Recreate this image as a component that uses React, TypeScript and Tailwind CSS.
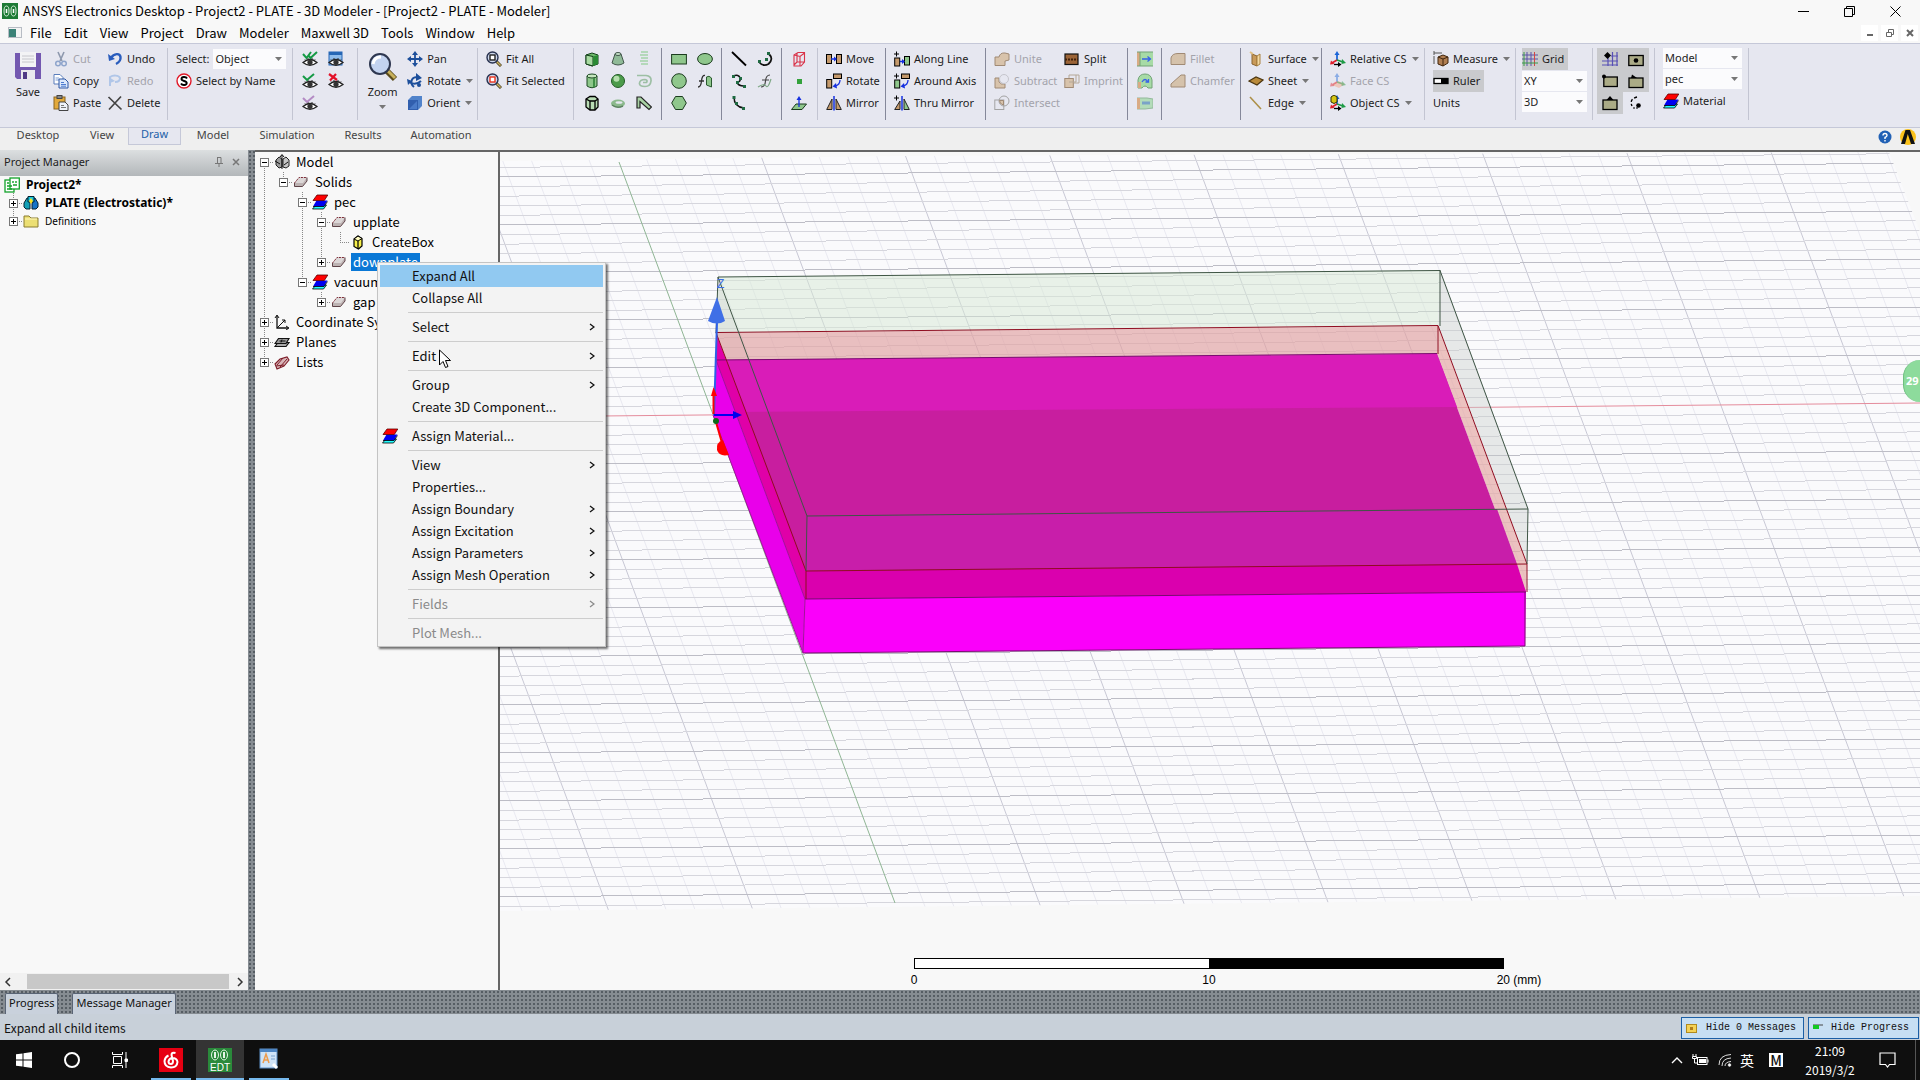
import React from 'react';

const Svg: React.FC<{ s?: number; children: React.ReactNode }> = ({ s = 16, children }) => (
  <svg width={s} height={s} viewBox="0 0 16 16" fill="none" className="shrink-0" aria-hidden="true">
    {children}
  </svg>
);

const Eye = () => (
  <>
    <path d="M1 11.5Q8 5.500 15 11.500Q8 17 1 11.500Z" fill="#fff" stroke="#222" strokeWidth="1.300" />
    <circle cx="8" cy="11.300" r="2.600" fill="#333" />
    <path d="M3 8.500L4.500 10M6 7V9M10 7V9M13 8.500L11.500 10" stroke="#222" />
  </>
);

const Stack = () => (
  <>
    <path d="M4 11H14.500L11.500 15H.5Z" fill="#2ff" stroke="#000" strokeWidth=".8" />
    <path d="M4.500 6.500H15.500L12 12.500H1Z" fill="#0000f0" />
    <path d="M1 12.500H12L15.500 7.500" stroke="#000" strokeWidth=".8" />
    <path d="M5 1H15.800L12.300 6.500H1Z" fill="#f00" stroke="#5a0000" strokeWidth=".8" />
  </>
);

const Lens: React.FC<{ c: string }> = ({ c }) => (
  <>
    <path d="M10 10L15 15" stroke="#4a3f20" strokeWidth="3" />
    <path d="M10.500 10.500L14.600 14.600" stroke="#c9b25f" strokeWidth="1.400" />
    <circle cx="6.500" cy="6.500" r="5.500" fill="#cdd7ec" stroke="#26304e" strokeWidth="1.400" />
    <rect x="4" y="4" width="5" height="5" fill="#fff" stroke={c} strokeWidth="1.400" />
  </>
);

const Axes: React.FC<{ soft?: boolean }> = ({ soft }) => (
  <g opacity={soft ? 0.45 : 1}>
    <path d="M7 9V2" stroke="#1c66d8" strokeWidth="1.800" />
    <path d="M4.500 4L7 0L9.500 4Z" fill="#1c66d8" />
    <path d="M7 9L2 12" stroke="#e0202c" strokeWidth="1.800" />
    <path d="M0 13.500L1 9.500L4.500 13Z" fill="#e0202c" />
    <path d="M7 9L13 11" stroke="#1d9b46" strokeWidth="1.800" />
    <path d="M12 8L16 12L11.500 13Z" fill="#1d9b46" />
  </g>
);

const tan = '#c59a6c';
const green = '#8fc78c';

const icons: Record<string, React.ReactNode> = {
  cut: <><path d="M5 1L9 10M11 1L7 10" stroke="#8d98ad" strokeWidth="1.600" /><circle cx="5" cy="12.500" r="2.300" stroke="#8fa5cc" strokeWidth="1.500" /><circle cx="11" cy="12.500" r="2.300" stroke="#8fa5cc" strokeWidth="1.500" /></>,
  copy: <><path d="M1 1.500H7L10 4.500V11H1Z" fill="#fff" stroke="#5a7dbb" /><path d="M2.500 5H6M2.500 7H6" stroke="#7f9fd6" /><path d="M6 6H12L15 9V15H6Z" fill="#dce8fb" stroke="#2c56a5" /><path d="M8 9.500H11M8 11.500H13M8 13.200H13" stroke="#4d7bd0" /></>,
  paste: <><rect x="1" y="2" width="11" height="12" fill="#e2a93b" stroke="#8a6420" /><rect x="4" y="0.500" width="5" height="3" fill="#888" stroke="#444" /><path d="M6 7H12L15 10V15.500H6Z" fill="#eef2fa" stroke="#444" /><path d="M8 10.500H11M8 12.500H13" stroke="#777" /></>,
  undo: <><path d="M1 3L2 10L8 8Z" fill="#2a5dbd" /><path d="M4 7C7 2 13 2 13.500 6C14 10 11 12 9 13" stroke="#2a5dbd" strokeWidth="2.400" /></>,
  redo: <><path d="M2 4L3 10L8 8Z" fill="#b0c6e8" /><path d="M3 13V4C6 2 12 2 13 5C13 8 11 9 8 9" stroke="#b0c6e8" strokeWidth="2" /></>,
  del: <path d="M1.500 2L14.500 14.500M14 1.500L2 14.500" stroke="#444" strokeWidth="1.700" />,
  byName: <><circle cx="8" cy="8" r="7" fill="#fff" stroke="#e01828" strokeWidth="1.400" /><path d="M11 5.500C10 3.500 5.500 3.500 5.500 6C5.500 8.500 10.700 7.500 10.700 10C10.700 12.500 6 12.500 5 10.500" stroke="#000" strokeWidth="1.900" /></>,
  eyeAll: <><Eye /><path d="M1 3L4.500 7L9 1M6 4L8.500 7L15 1" stroke="#159a45" strokeWidth="2" /></>,
  eyeWin: <><rect x="1" y="1" width="13" height="13" fill="#8fbdec" stroke="#2667b5" /><rect x="1" y="1" width="13" height="3" fill="#2667b5" /><Eye /></>,
  eyeOn: <><Eye /><path d="M1 3L5 7L12 1" stroke="#159a45" strokeWidth="2" /></>,
  eyeOff: <><Eye /><path d="M1 1L9 7M8 1L2 7.500" stroke="#e3122a" strokeWidth="2.200" /></>,
  eyeAct: <><Eye /><path d="M1 3L5 7L12 1" stroke="#b48bc4" strokeWidth="2" /></>,
  pan: <><path d="M8 2V14M2 8H14" stroke="#1d4f9b" strokeWidth="1.800" /><path d="M8 0L11 4H5ZM8 16L5 12H11ZM0 8L4 5V11ZM16 8L12 11V5Z" fill="#1d4f9b" /></>,
  rot: <><path d="M7 14C2 10 5 2 11 5M14 8C10 12 3 11 2 8" stroke="#1d4f9b" strokeWidth="2" /><path d="M9 0L15 5L9 8ZM5 8L0 6L1 12Z" fill="#1d4f9b" /><circle cx="12" cy="12" r="2" fill="#1d4f9b" /></>,
  orient: <><path d="M1 5L5 1H15V11L11 15H1Z" fill="#5183cb" /><path d="M1 5H11V15H1Z" fill="#315fae" /><path d="M2 14L10 6V14Z" fill="#4a7bc8" /></>,
  fitAll: <Lens c="#222" />,
  fitSel: <Lens c="#e8321c" />,
  box: <><path d="M2 4L8 2L14 4V13L8 15L2 13Z" fill="#6fba6c" stroke="#123f18" /><path d="M2 4L9 5.500V15L2 13Z" fill="#a8dba2" stroke="#123f18" /><path d="M9 5.500L14 4V13L9 15Z" fill="#2b8a35" /></>,
  cone: <><path d="M5 3L2 12Q8 16 14 12L11 3Z" fill="#8fba97" stroke="#41564a" /><ellipse cx="8" cy="3" rx="3" ry="1.500" fill="#c3dfc6" stroke="#41564a" /></>,
  helix: <path d="M5 1H12M4 4H12M5 7H12M4 10H12M5 13H12" stroke="#a4d3a8" strokeWidth="1.500" />,
  cyl: <><path d="M3 3V13Q8 16.500 13 13V3Z" fill="#8dc78a" stroke="#1e4a25" /><ellipse cx="8" cy="3" rx="5" ry="2" fill="#c4e6be" stroke="#1e4a25" /><path d="M10 5V14.500" stroke="#3f8f46" strokeWidth="2" /></>,
  sphere: <><circle cx="8" cy="8" r="6.500" fill="#4b9b4a" stroke="#245c28" /><circle cx="6.500" cy="5.800" r="3" fill="#b6dfae" /></>,
  spiral: <path d="M1 2.500H10Q15.500 3 15 8Q14.500 13.500 9 13.500Q3 13.500 3.500 10Q4 6.500 9 6.500Q12 7 10.500 9.500H7" stroke="#9dbfa4" strokeWidth="1.700" />,
  poly: <><path d="M2 4L6 1.500H11L14 4V12L11 15H6L2 12Z" fill="#b8dcb4" stroke="#000" strokeWidth="1.300" /><path d="M2 4L6 6H11L14 4M6 6V15M11 6V15" stroke="#000" strokeWidth="1.300" /></>,
  torus: <><ellipse cx="8" cy="8.500" rx="7" ry="4" fill="#8bb98c" /><ellipse cx="9" cy="7.500" rx="3.500" ry="1.300" fill="#e6e7f0" /><path d="M2 10Q7 14 13 11" stroke="#5d8261" strokeWidth="1.500" /></>,
  sweep: <path d="M1 13V2H5L15.500 12L13 14.500L4 6.500V13Z" fill="#a9d2a5" stroke="#222" strokeWidth="1.200" />,
  rect: <rect x="0.600" y="3.500" width="14.800" height="9.500" fill={green} stroke="#1b3b1e" />,
  ellipse: <ellipse cx="8" cy="8" rx="7.400" ry="5.500" fill={green} stroke="#1b3b1e" />,
  circle: <circle cx="8" cy="8" r="7.300" fill={green} stroke="#1b3b1e" />,
  eqSurf: <><path d="M1 14Q4 14 4.500 8T8 2.500M2 8H7" stroke="#333" strokeWidth="1.300" /><path d="M9.500 4Q12 2 14.500 5V14L9.500 12Z" fill={green} stroke="#2b5a30" /></>,
  hex: <path d="M4.500 1.500H11.500L15.300 8L11.500 14.500H4.500L.7 8Z" fill={green} stroke="#1b3b1e" />,
  line: <path d="M1 1L15 14.500" stroke="#000" strokeWidth="1.800" />,
  arc: <><path d="M2 11Q6 16 11.500 13Q17 8 12 3" stroke="#111" strokeWidth="1.800" /><path d="M1 9H4V12H1ZM8 7H11V10H8ZM10 1H13V4H10Z" fill="#1f6a42" /></>,
  spline: <><path d="M2 3Q8 1 9 5T6 9Q7 13 13 13" stroke="#111" strokeWidth="1.500" /><path d="M1 2H4V5H1ZM8 4H11V7H8ZM5 8H8V11H5ZM12 12H15V15H12Z" fill="#1f6a42" /></>,
  eqCurve: <><path d="M4 14Q8 14 8.500 8T13 2M5 7H12" stroke="#444" strokeWidth="1.200" /><path d="M1 14Q7 10 9 13T14 6" stroke="#80a988" strokeWidth="1.200" /></>,
  arc3: <><path d="M3 2Q3 12 13 13" stroke="#111" strokeWidth="1.500" /><path d="M1.500 1H4.500V4H1.500ZM4 7H7V10H4ZM11 12H14V15H11Z" fill="#1f6a42" /></>,
  wire: <path d="M3 4L7 1.500H13.500V11L10 15H3ZM3 4L9 5.500L13.500 2M9 5.500V15M6 2V11H13M3 14L6 11" stroke="#d93248" strokeWidth="1.100" />,
  point: <rect x="6" y="6" width="5" height="5" fill="#33a23c" />,
  plane: <><path d="M5 9H15.500L11 14.500H.5Z" fill={green} stroke="#1b3b1e" /><path d="M8 12V3" stroke="#1530e0" strokeWidth="1.300" /><path d="M5.500 5L8 1L10.500 5Z" fill="#1530e0" /></>,
  move: <><rect x=".5" y="3.500" width="5" height="9" fill={tan} stroke="#000" /><rect x="10.500" y="3.500" width="5" height="9" fill={tan} stroke="#000" /><path d="M5 8H9" stroke="#1530e0" strokeWidth="1.500" /><path d="M8 5.500L11 8L8 10.500Z" fill="#1530e0" /></>,
  rotate: <><rect x=".7" y="6.500" width="5" height="8.500" fill={tan} stroke="#000" /><rect x="7.500" y="1" width="8" height="4.500" fill={tan} stroke="#000" /><path d="M14 7Q14 12 9 13" stroke="#1530e0" strokeWidth="1.300" /><path d="M10 10L6.500 13.500L11 15.500Z" fill="#1530e0" /></>,
  mirror: <><path d="M6 4V14.500H.7Z" fill={tan} stroke="#222" /><path d="M10 4V14.500H15.300Z" fill={tan} stroke="#222" /><path d="M8 1V15.500" stroke="#1530e0" strokeWidth="1.500" /></>,
  along: <><rect x=".7" y="7" width="5" height="8" fill={tan} stroke="#000" /><rect x="10.500" y="5.500" width="5" height="8.500" fill={green} stroke="#000" /><path d="M6 10.500H10" stroke="#1530e0" strokeWidth="1.500" /><path d="M8 8L11 10.500L8 13Z" fill="#1530e0" /><path d="M0 3H5M2.500 .5V5.500" stroke="#000" /></>,
  around: <><rect x=".7" y="7" width="5" height="8" fill={green} stroke="#000" /><rect x="7.500" y="1" width="8" height="4.500" fill={tan} stroke="#000" /><path d="M14 7Q14 12 9 13" stroke="#1530e0" strokeWidth="1.300" /><path d="M10 10L6.500 13.500L11 15.500Z" fill="#1530e0" /><path d="M0 3H5M2.500 .5V5.500" stroke="#000" /></>,
  thru: <><path d="M6 6V14.500H.7Z" fill={tan} stroke="#222" /><path d="M10 4V14.500H15.300Z" fill={green} stroke="#222" /><path d="M8 1V15.500" stroke="#1530e0" strokeWidth="1.500" /><path d="M0 3H5M2.500 .5V5.500" stroke="#000" /></>,
  unite: <path d="M1 6H5Q6 1.500 11 2L15 3V9L11 10V14.500H1Z" fill="#d8c3ab" stroke="#a08a75" />,
  subtract: <><path d="M1 5H5V9Q7 12 11 11V15H1Z" fill="#d8c3ab" stroke="#a08a75" /><circle cx="10" cy="6" r="4.500" stroke="#c5c5cc" /></>,
  intersect: <><rect x=".8" y="5" width="9" height="9.500" stroke="#a3a3a3" /><circle cx="10" cy="6" r="5" stroke="#a3a3a3" /><path d="M5.500 5.500H9.500V10Q5.500 9 5.500 5.500Z" fill="#d8c3ab" stroke="#a08a75" /></>,
  split: <><rect x="1" y="3" width="13" height="10.500" fill="#9b6437" stroke="#111" strokeWidth="1.200" /><path d="M1 8.500H14" stroke="#40210b" strokeDasharray="2 1" strokeWidth="2" /></>,
  imprint: <><rect x=".8" y="5.500" width="8.500" height="9" fill="#d8c3ab" stroke="#a08a75" /><path d="M5 5V2H15V10H10M5 9H12V2" stroke="#b5a898" /></>,
  gLine: <><rect x="0" y="1" width="16" height="14" fill="#a7dba6" /><rect x="0" y="1" width="3" height="14" fill="#d9ab84" /><path d="M0 1H16M0 15H16M3 1V15" stroke="#72a377" /><path d="M5 8H13M10.500 5.500L13.500 8L10.500 10.500" stroke="#3762e8" strokeWidth="1.300" /></>,
  gArc: <><path d="M1 15V7Q2 1 8 1T15 7V15H11Q8 11 5 15Z" fill="#a7dba6" stroke="#72a377" /><path d="M1 9H4V15H1Z" fill="#d9ab84" /><path d="M5 9Q8 4 11 9M8.500 9H11.500V6" stroke="#3762e8" strokeWidth="1.300" /></>,
  gPath: <><path d="M0 3H10L16 4V13L8 14H0Z" fill="#b3dcb9" stroke="#93b99b" /><rect x="0" y="3" width="3" height="11" fill="#d9ab84" /><path d="M5 8H13" stroke="#7aa3c8" strokeWidth="3" /></>,
  fillet: <path d="M1 13.500V7Q2 2.500 8 2.500H15V13.500Z" fill="#d5c2ab" stroke="#a08a75" />,
  chamfer: <path d="M1 14V11L11 2H15V14Z" fill="#d5c2ab" stroke="#a08a75" />,
  surface: <><path d="M4 3L9 5V15L4 13Z" fill="#c99a58" stroke="#8a6430" /><path d="M9 5L12 3V13L9 15Z" fill="#f3d9a2" stroke="#a9813f" /><path d="M2 1L5 3" stroke="#e0bf80" strokeWidth="2" /></>,
  sheet: <path d="M1 8L8 4L15 7L9 12Z" fill="#b98a3a" stroke="#4c3610" strokeWidth="1.200" />,
  edge: <path d="M2 2L13 14" stroke="#ad9048" strokeWidth="1.600" />,
  relCS: <><Axes /><path d="M4 13.500H9" stroke="#000" strokeWidth="1.300" /><path d="M8 11L11.500 13.500L8 16Z" fill="#000" /></>,
  faceCS: <><path d="M2 12L8 8L15 11L9 15Z" fill="#edc7bc" /><Axes soft /></>,
  objCS: <><Axes /><path d="M1 2L4 0L7 2V7L4 8.500L1 7Z" fill="#d6c512" stroke="#332f00" /><path d="M4 13.500H9" stroke="#000" strokeWidth="1.300" /><path d="M8 11L11.500 13.500L8 16Z" fill="#000" /></>,
  measure: <><path d="M5 6L10 4L15 6V12L10 15L5 13Z" fill="#b07e51" stroke="#40250d" /><path d="M5 6L10 8V15M10 8L15 6" stroke="#40250d" /><path d="M1 2H9M1 0V4M1 5V13" stroke="#555" /></>,
  ruler: <><rect x="1" y="5.500" width="14" height="5" fill="#fff" stroke="#000" strokeWidth="1.300" /><rect x="8" y="5.500" width="7" height="5" fill="#000" /></>,
  grid: <><path d="M5 1V15M9 1V15" stroke="#5b53a8" /><path d="M0 4H16M0 8H16" stroke="#5b53a8" /><path d="M12.500 1V15" stroke="#d44545" /><path d="M0 12H16" stroke="#3a9a48" /><path d="M2 1V15" stroke="#3a9a48" /></>,
  snapGrid: <><path d="M6 3V15M10.500 1V15M15 1V15M0 10H16M0 14H16M9 5H16" stroke="#5850b5" strokeWidth="1.200" /><path d="M5.500 1L9 4.500L5.500 8L2 4.500Z" fill="#000" /></>,
  snapCenter: <><rect x=".8" y="4.500" width="14.400" height="10" fill="#abab86" stroke="#000" strokeWidth="1.300" /><circle cx="8" cy="9.500" r="2.300" fill="#000" /></>,
  snapVertex: <><rect x="1.800" y="4" width="13.500" height="9.500" fill="#abab86" stroke="#000" strokeWidth="1.300" /><circle cx="2" cy="3.500" r="2" fill="#000" /></>,
  snapEdge: <><rect x="1" y="5" width="14" height="9.500" fill="#abab86" stroke="#000" strokeWidth="1.300" /><path d="M4 1.500L9 5H3Z" fill="#000" /></>,
  snapMid: <><rect x="1" y="5" width="14" height="9.500" fill="#abab86" stroke="#000" strokeWidth="1.300" /><path d="M8 1L11.500 5H4.500Z" fill="#000" /></>,
  snapArc: <><path d="M9 2Q1 4 4 11" stroke="#000" strokeDasharray="3 2" strokeWidth="1.300" /><path d="M5 13H11" stroke="#000" strokeDasharray="2 1" /><circle cx="10.500" cy="10.500" r="2.300" fill="#000" /></>,
  stack: <Stack />,
  model: <><path d="M2 6L5 3L8 5V13L5 14L2 11Z" fill="#9b9b9b" stroke="#222" /><path d="M9 5L12 3L15 6V12L12 14L9 13Z" fill="#c7c7c7" stroke="#222" /><path d="M8 1V15M8 0.500L10 3M8 .5L6 3M1 7L6 10M14 8L10 11" stroke="#111" /></>,
  solid: <><path d="M1.500 9L6 3.500H14V7L9.500 12.500H1.500Z" fill="#bdb3b3" /><path d="M1.500 9L6 3.500H14L10 9Z" fill="#dcd7d7" /><path d="M1.500 9L6 3.500H14" stroke="#7d2a35" strokeDasharray="2 1" /><path d="M14 3.500V7L9.500 12.500H1.500V9" stroke="#5f4348" /></>,
  cbox: <><path d="M4 5L8 2L12 4.500V12L8.500 15L4 12.500Z" fill="#f7f04a" stroke="#000" strokeWidth="1.200" /><path d="M4 5L8 7L12 4.500L8 2Z" fill="#fffcc0" stroke="#000" /><path d="M8 7V15" stroke="#000" strokeWidth="1.200" /></>,
  coord: <><path d="M3 2V14H14" stroke="#111" strokeWidth="1.300" /><path d="M1 4L3 1L5 4M12 12L15 14L12 16M3 14L11 6M8 6H11V9" stroke="#111" /></>,
  planes: <><path d="M1 12.500L4 8.500H15L12 12.500Z" fill="#aaa" stroke="#111" strokeWidth="1.200" /><path d="M1 9.500L4.500 4.500H15L12 9.500Z" fill="#999" stroke="#111" strokeWidth="1.200" /><path d="M5.500 7H11.500M8 5.500L7 8.500" stroke="#111" /></>,
  lists: <><path d="M1 10L6 5L13 3L15 6L10 12L3 15Z" fill="#d9b5b8" stroke="#7d1d28" strokeWidth="1.100" /><path d="M3 11L9 4M6 13L13 5M2 12L10 11" stroke="#7d1d28" /></>,
  project: <><rect x="1" y="3" width="9" height="12" fill="#fff" stroke="#12a22a" strokeWidth="1.300" /><rect x="6" y="1" width="9.300" height="11" fill="#fff" stroke="#12a22a" strokeWidth="1.300" /><path d="M3 6H5M3 9H8M3 12H8M9 4V6M12 4V6M9 8H13" stroke="#12a22a" strokeWidth="1.400" /></>,
  design: <><path d="M1 8L4 3H7V14H3L1 12Z" fill="#12a0b5" stroke="#04202e" /><path d="M9 3H12L15 8V12L13 14H9Z" fill="#1473c8" stroke="#04202e" /><path d="M5 1.500H11V7H5Z" fill="#19c8e0" stroke="#04202e" /><path d="M8 3L10 6L8 9L6 6Z" fill="#ffe11a" /></>,
  folder: <><path d="M1 3H6L8 5H15V14H1Z" fill="#ecdf73" stroke="#8a7c31" /><path d="M2 6H14" stroke="#fff8c0" /></>,
};

const Icon: React.FC<{ name: string; s?: number }> = ({ name, s }) => <Svg s={s}>{icons[name]}</Svg>;

const Caret = () => (
  <svg width="7" height="4" viewBox="0 0 7 4" className="shrink-0" aria-hidden="true"><path d="M0 0H7L3.500 4Z" fill="#777" /></svg>
);

interface CmdProps {
  icon: string;
  label: string;
  off?: boolean;
  caret?: boolean;
  on?: boolean;
}

const Cmd: React.FC<CmdProps> = ({ icon, label, off, caret, on }) => (
  <button disabled={off} className={`flex h-[22px] items-center gap-1 whitespace-nowrap pr-1 ${off ? 'text-[#a3a3ab]' : 'text-[#1c1c1c]'} ${on ? 'bg-[#c9cacd]' : ''}`}>
    <Icon name={icon} />
    <span>{label}</span>
    {caret && <span className="ml-px"><Caret /></span>}
  </button>
);

const IconGrid: React.FC<{ cols: string[][]; label: string }> = ({ cols, label }) => (
  <div className="flex" role="group" aria-label={label}>
    {cols.map((col, i) => (
      <div key={i} className="flex w-[26px] flex-col">
        {col.map(n => (
          <button key={n} aria-label={n} className="flex h-[22px] items-center justify-center"><Icon name={n} /></button>
        ))}
      </div>
    ))}
  </div>
);

const Group: React.FC<{ w: string; soft?: boolean; children: React.ReactNode }> = ({ w, soft, children }) => (
  <div className={`flex h-[72px] shrink-0 border-r ${soft ? 'border-[#c3c5d2]' : 'border-[#85889a]'} ${w}`}>{children}</div>
);

const Drop: React.FC<{ label: string; value: string; w: string }> = ({ label, value, w }) => (
  <div className={`relative flex h-[20px] items-center bg-[#fbfbfd] ${w}`}>
    <select aria-label={label} className="h-full w-full appearance-none bg-transparent pl-0.5 text-[#222] outline-none">
      <option>{value}</option>
    </select>
    <span className="pointer-events-none absolute right-1"><Caret /></span>
  </div>
);

const tabs = [
  { name: 'Desktop', w: 'w-[76px]' },
  { name: 'View', w: 'w-[52px]' },
  { name: 'Draw', w: 'w-[53px]' },
  { name: 'Model', w: 'w-[64px]' },
  { name: 'Simulation', w: 'w-[84px]' },
  { name: 'Results', w: 'w-[68px]' },
  { name: 'Automation', w: 'w-[88px]' },
];
const menus = ['File', 'Edit', 'View', 'Project', 'Draw', 'Modeler', 'Maxwell 3D', 'Tools', 'Window', 'Help'];

const Ribbon = () => (
  <div className="flex h-[85px] shrink-0 overflow-hidden border-y border-[#c5c8d8] bg-[#e6e7f0] pt-1 pl-[3px]">
    <Group w="w-[165px]" soft>
      <button className="flex w-[50px] flex-col items-center pt-1">
        <svg width="28" height="28" viewBox="0 0 28 28" aria-hidden="true">
          <path d="M1 1H27V27H3L1 25Z" fill="#7358b0" />
          <rect x="6" y="0" width="16" height="15" fill="#f3f3f5" />
          <path d="M8 4H20M8 7H20M8 10H20" stroke="#c6c6cc" />
          <rect x="7" y="18" width="14" height="9" fill="#e9e9ee" />
          <rect x="9" y="20" width="4" height="7" fill="#4f3a86" />
        </svg>
        <span className="mt-1">Save</span>
      </button>
      <div className="flex w-[54px] flex-col items-start">
        <Cmd icon="cut" label="Cut" off />
        <Cmd icon="copy" label="Copy" />
        <Cmd icon="paste" label="Paste" />
      </div>
      <div className="flex flex-col items-start">
        <Cmd icon="undo" label="Undo" />
        <Cmd icon="redo" label="Redo" off />
        <Cmd icon="del" label="Delete" />
      </div>
    </Group>
    <Group w="w-[125px]" soft>
      <div className="flex flex-col items-start pl-2">
        <div className="flex h-[22px] items-center gap-1">
          <span>Select:</span>
          <Drop label="Select" value="Object" w="w-[73px]" />
        </div>
        <Cmd icon="byName" label="Select by Name" />
      </div>
    </Group>
    <Group w="w-[65px]" soft>
      <div className="pl-1"><IconGrid label="Visibility" cols={[['eyeAll', 'eyeOn', 'eyeAct'], ['eyeWin', 'eyeOff']]} /></div>
    </Group>
    <Group w="w-[120px]" soft>
      <button className="flex w-[50px] flex-col items-center pt-1">
        <svg width="30" height="30" viewBox="0 0 30 30" aria-hidden="true">
          <path d="M19 19L27 27" stroke="#5b4c1c" strokeWidth="6" />
          <path d="M20 19L27 26" stroke="#c8b15c" strokeWidth="3" />
          <circle cx="12" cy="12" r="10" fill="#c3d3f0" stroke="#2e3750" strokeWidth="2" />
          <path d="M5 12Q6 5 13 5" stroke="#fff" strokeWidth="3" fill="none" />
        </svg>
        <span className="mt-0.5 mb-1">Zoom</span>
        <Caret />
      </button>
      <div className="flex flex-col items-start">
        <Cmd icon="pan" label="Pan" />
        <Cmd icon="rot" label="Rotate" caret />
        <Cmd icon="orient" label="Orient" caret />
      </div>
    </Group>
    <Group w="w-[96px]" soft>
      <div className="flex flex-col items-start pl-2">
        <Cmd icon="fitAll" label="Fit All" />
        <Cmd icon="fitSel" label="Fit Selected" />
      </div>
    </Group>
    <Group w="w-[88px]">
      <div className="pl-[5px]"><IconGrid label="Solids" cols={[['box', 'cyl', 'poly'], ['cone', 'sphere', 'torus'], ['helix', 'spiral', 'sweep']]} /></div>
    </Group>
    <Group w="w-[60px]">
      <div className="pl-1"><IconGrid label="Sheets" cols={[['rect', 'circle', 'hex'], ['ellipse', 'eqSurf']]} /></div>
    </Group>
    <Group w="w-[60px]">
      <div className="pl-1"><IconGrid label="Curves" cols={[['line', 'spline', 'arc3'], ['arc', 'eqCurve']]} /></div>
    </Group>
    <Group w="w-[36px]" soft>
      <div className="pl-1"><IconGrid label="Primitives" cols={[['wire', 'point', 'plane']]} /></div>
    </Group>
    <Group w="w-[68px]">
      <div className="flex flex-col items-start pl-2">
        <Cmd icon="move" label="Move" />
        <Cmd icon="rotate" label="Rotate" />
        <Cmd icon="mirror" label="Mirror" />
      </div>
    </Group>
    <Group w="w-[100px]">
      <div className="flex flex-col items-start pl-2">
        <Cmd icon="along" label="Along Line" />
        <Cmd icon="around" label="Around Axis" />
        <Cmd icon="thru" label="Thru Mirror" />
      </div>
    </Group>
    <Group w="w-[142px]">
      <div className="flex w-[78px] shrink-0 flex-col items-start pl-2">
        <Cmd icon="unite" label="Unite" off />
        <Cmd icon="subtract" label="Subtract" off />
        <Cmd icon="intersect" label="Intersect" off />
      </div>
      <div className="flex flex-col items-start">
        <Cmd icon="split" label="Split" />
        <Cmd icon="imprint" label="Imprint" off />
      </div>
    </Group>
    <Group w="w-[34px]">
      <div className="pl-1"><IconGrid label="Sweep" cols={[['gLine', 'gArc', 'gPath']]} /></div>
    </Group>
    <Group w="w-[79px]">
      <div className="flex flex-col items-start pl-2">
        <Cmd icon="fillet" label="Fillet" off />
        <Cmd icon="chamfer" label="Chamfer" off />
      </div>
    </Group>
    <Group w="w-[81px]">
      <div className="flex flex-col items-start pl-[7px]">
        <Cmd icon="surface" label="Surface" caret />
        <Cmd icon="sheet" label="Sheet" caret />
        <Cmd icon="edge" label="Edge" caret />
      </div>
    </Group>
    <Group w="w-[103px]" soft>
      <div className="flex flex-col items-start pl-2">
        <Cmd icon="relCS" label="Relative CS" caret />
        <Cmd icon="faceCS" label="Face CS" off />
        <Cmd icon="objCS" label="Object CS" caret />
      </div>
    </Group>
    <Group w="w-[91px]" soft>
      <div className="flex flex-col items-start pl-2">
        <Cmd icon="measure" label="Measure" caret />
        <Cmd icon="ruler" label="Ruler" on />
        <button className="h-[22px]">Units</button>
      </div>
    </Group>
    <Group w="w-[77px]" soft>
      <div className="flex flex-col items-start gap-px pl-1.5">
        <Cmd icon="grid" label="Grid" on />
        <Drop label="Plane" value="XY" w="w-[65px]" />
        <Drop label="Dimension" value="3D" w="w-[65px]" />
      </div>
    </Group>
    <Group w="w-[62px]" soft>
      <div className="mb-1.5 ml-1 flex bg-[linear-gradient(#c9cacd,#c9cacd)] bg-[size:52px_44px] bg-no-repeat">
        <div className="bg-[#c9cacd]"><IconGrid label="Snap" cols={[['snapGrid', 'snapVertex', 'snapMid']]} /></div>
        <IconGrid label="Snap modes" cols={[['snapCenter', 'snapEdge', 'snapArc']]} />
      </div>
    </Group>
    <Group w="w-[94px]" soft>
      <div className="flex flex-col items-start gap-px pl-2">
        <Drop label="Model type" value="Model" w="w-[79px]" />
        <Drop label="Default material" value="pec" w="w-[79px]" />
        <Cmd icon="stack" label="Material" />
      </div>
    </Group>
  </div>
);

interface TreeRow {
  guides: string;
  box?: '+' | '-';
  icon: string;
  label: string;
  selected?: boolean;
}

// guides: one char per indent column, | passes through, T branches, L ends, R starts
const modelTree: TreeRow[] = [
  { guides: 'R', box: '-', icon: 'model', label: 'Model' },
  { guides: '|L', box: '-', icon: 'solid', label: 'Solids' },
  { guides: '| T', box: '-', icon: 'stack', label: 'pec' },
  { guides: '| |T', box: '-', icon: 'solid', label: 'upplate' },
  { guides: '| ||L', icon: 'cbox', label: 'CreateBox' },
  { guides: '| |L', box: '+', icon: 'solid', label: 'downplate', selected: true },
  { guides: '| L', box: '-', icon: 'stack', label: 'vacuum' },
  { guides: '|  L', box: '+', icon: 'solid', label: 'gap' },
  { guides: 'T', box: '+', icon: 'coord', label: 'Coordinate Systems' },
  { guides: 'T', box: '+', icon: 'planes', label: 'Planes' },
  { guides: 'L', box: '+', icon: 'lists', label: 'Lists' },
];

const Guide: React.FC<{ kind: string; box?: string }> = ({ kind, box }) => (
  <svg width="19" height="20" viewBox="0 0 19 20" fill="none" className="shrink-0" aria-hidden="true">
    {'|TL'.includes(kind) && <path d="M9.500 0V10" stroke="#888" strokeDasharray="1 1" />}
    {'|TR'.includes(kind) && <path d="M9.500 10V20" stroke="#888" strokeDasharray="1 1" />}
    {'TLR'.includes(kind) && <path d="M9 10.500H19" stroke="#888" strokeDasharray="1 1" />}
    {box && <rect x="5.500" y="6.500" width="8" height="8" fill="#fff" stroke="#777" />}
    {box && <path d="M7 10.500H12" stroke="#000" />}
    {box === '+' && <path d="M9.500 8V13" stroke="#000" />}
  </svg>
);

const ProjectManager = () => (
  <aside className="flex w-[248px] shrink-0 flex-col bg-[#f8f8f8]">
    <div className="flex h-[26px] items-center bg-linear-to-b from-[#dcdfe0] to-[#b3b7ba] px-1 pb-0.5 text-[#222]">
      <h2 className="flex-1">Project Manager</h2>
      <button aria-label="Pin" className="mr-2">
        <svg width="10" height="12" viewBox="0 0 10 12" fill="none"><path d="M3 1.500H7V7M3.500 1V7M1 7.500H9M5 7.500V11" stroke="#777" /></svg>
      </button>
      <button aria-label="Close panel" className="mr-1">
        <svg width="8" height="8" viewBox="0 0 8 8"><path d="M1 1L7 7M7 1L1 7" stroke="#777" strokeWidth="1.500" /></svg>
      </button>
    </div>
    <ul className="flex-1 pl-1 text-black">
      <li className="flex h-[18px] items-center gap-1.5 text-xs font-bold"><Icon name="project" />Project2*</li>
      <li className="flex h-[18px] items-center text-xs font-bold"><Guide kind="T" box="+" /><Icon name="design" /><span className="ml-1.5">PLATE (Electrostatic)*</span></li>
      <li className="flex h-[18px] items-center"><Guide kind="L" box="+" /><Icon name="folder" /><span className="ml-1.5 text-[10px]">Definitions</span></li>
    </ul>
    <div className="flex h-[17px] items-center gap-2 bg-[#f1f1f1] px-1">
      <svg width="7" height="10" viewBox="0 0 7 10" fill="none"><path d="M6 1L2 5L6 9" stroke="#333" strokeWidth="1.500" /></svg>
      <div className="ml-2 h-[15px] flex-1 bg-[#c8c8c8]" />
      <svg width="7" height="10" viewBox="0 0 7 10" fill="none"><path d="M1 1L5 5L1 9" stroke="#333" strokeWidth="1.500" /></svg>
    </div>
  </aside>
);

const ModelTree = () => (
  <aside className="w-[245px] shrink-0 overflow-hidden border-t-2 border-r-2 border-[#666] bg-[#f8f8f8] font-['Noto_Sans_CJK_SC',sans-serif] text-[13px] text-black">
    <ul>
      {modelTree.map(row => (
        <li key={row.label} className="flex h-[20px] items-center">
          {row.guides.split('').map((g, i, all) => (
            <Guide key={i} kind={g} box={i === all.length - 1 ? row.box : undefined} />
          ))}
          <Icon name={row.icon} />
          <span className={`ml-1 flex h-[18px] items-center whitespace-nowrap px-0.5 ${row.selected ? 'bg-[#0a78d6] text-white' : ''}`}>{row.label}</span>
        </li>
      ))}
    </ul>
  </aside>
);

const Scene = () => {
  const slope = 0.0098;
  const lean = 0.3725;
  const h: React.ReactNode[] = [];
  const v: React.ReactNode[] = [];
  for (let i = -29; i <= 54; i++) {
    if (i === 0) continue;
    const y = 417 + i * 9.6;
    h.push(<line key={i} x1="500" y1={y} x2="1920" y2={y - 1420 * slope} stroke={i % 5 === 0 ? '#bdbdc6' : '#d6d6dd'} />);
  }
  for (let i = -18; i <= 50; i++) {
    if (i === 0) continue;
    const x = 713 + i * 28.9;
    v.push(<line key={i} x1={x - 265 * lean} y1="150" x2={x + 500 * lean} y2="915" stroke={i % 5 === 0 ? '#c8c8d5' : '#e9e9f1'} />);
  }
  return (
    <svg viewBox="500 152 1420 838" preserveAspectRatio="xMidYMid slice" className="block h-full w-full" fill="none" role="img" aria-label="3D model view">
      <clipPath id="ground"><path d="M500 161L900 156L1889 152L1920 232V896L500 911Z" /></clipPath>
      <rect x="500" y="152" width="1420" height="838" fill="#f8f8f8" />
      <g clipPath="url(#ground)">
        <rect x="500" y="152" width="1420" height="760" fill="#fafafc" />
        {v}
        <g shapeRendering="crispEdges">{h}</g>
        <path d="M500 417L1920 403" stroke="#e48c9c" />
        <path d="M619 162L895 903" stroke="#8fb594" />
      </g>

      {/* vacuum gap */}
      <path d="M718 277L1440 270L1438 326L716 333Z" fill="#d6e8d4" fillOpacity=".5" />
      <path d="M1440 270L1528 509L1527 564L1438 326Z" fill="#c9ccca" fillOpacity=".4" />
      <path d="M718 277L807 516L805 571L716 333Z" fill="#c9ccca" fillOpacity=".3" />
      <path d="M716 333L1438 326L1437 354L716 360Z" fill="#e0a0a0" fillOpacity=".65" />
      <path d="M1438 326L1527 564L1526 592L1437 354Z" fill="#e6aaa6" fillOpacity=".7" />

      {/* lower plate */}
      <path d="M716 360L1437 354L1526 592L805 599Z" fill="#c81e9f" />
      <path d="M716 360L1437 354L1457 407L735 412Z" fill="#d91cb8" />
      <path d="M807 516L1497 509L1517 564L806 571Z" fill="#c81eaa" />
      <path d="M806 571L1517 564L1526 592L805 599Z" fill="#da00ae" />
      <path d="M716 360L716 333L806 571L805 599Z" fill="#e000a8" />
      <path d="M716 360L805 599L803 653L713 415Z" fill="#e900ea" />
      <path d="M805 599L1526 592L1525 646L803 653Z" fill="#fa00fa" />

      <path d="M716 360L1437 353.500M805 599L1526 592M803 653L1525 646V592" stroke="#7a0a70" />
      <path d="M716 360L805 599L803 653L713 415" stroke="#a0109a" />
      <path d="M716 332.500L1438 325.500L1527 564L806 571ZM806 571V599M1527 564V592M1438 326V354" stroke="#8f0c20" />
      <path d="M718 277L1440 270.500L1528 509L807 516ZM718 277L716 333M1440 270V326M807 516L806 571M1528 509L1527 564" stroke="#3f5545" />

      <path d="M717 322L714 415" stroke="#2c5fe6" strokeWidth="2" />
      <path d="M717 297L725 321Q717 326 708 321Z" fill="#3f6fe6" />
      <text x="717" y="288" fill="#3f6fe6" className="font-['Liberation_Sans',sans-serif] text-xs">Z</text>
      <path d="M713.500 395V414" stroke="#f00" strokeWidth="2" />
      <path d="M713.500 387L717 396H711Z" fill="#f00" />
      <path d="M714 415H735" stroke="#00e" strokeWidth="2" />
      <path d="M733 411L742 415L733 419Z" fill="#00e" />
      <path d="M716 422L722 443" stroke="#f00" strokeWidth="2" />
      <path d="M729 455Q719 457 717 450Q716 442 723 440Z" fill="#f00" />
      <circle cx="716" cy="421" r="3" fill="#0b6a1a" />

      <rect x="914.500" y="958.500" width="295" height="10" fill="#fff" stroke="#000" />
      <rect x="1209" y="958" width="295" height="11" fill="#000" />
      <g className="font-['Liberation_Sans',sans-serif] text-xs" fill="#000" textAnchor="middle">
        <text x="914" y="984">0</text>
        <text x="1209" y="984">10</text>
        <text x="1519" y="984">20 (mm)</text>
      </g>
    </svg>
  );
};

type Entry = { label: string; sub?: boolean; off?: boolean; icon?: string; hot?: boolean } | null;

const entries: Entry[] = [
  { label: 'Expand All', hot: true },
  { label: 'Collapse All' },
  null,
  { label: 'Select', sub: true },
  null,
  { label: 'Edit', sub: true },
  null,
  { label: 'Group', sub: true },
  { label: 'Create 3D Component...' },
  null,
  { label: 'Assign Material...', icon: 'stack' },
  null,
  { label: 'View', sub: true },
  { label: 'Properties...' },
  { label: 'Assign Boundary', sub: true },
  { label: 'Assign Excitation', sub: true },
  { label: 'Assign Parameters', sub: true },
  { label: 'Assign Mesh Operation', sub: true },
  null,
  { label: 'Fields', sub: true, off: true },
  null,
  { label: 'Plot Mesh...', off: true },
];

const ContextMenu = () => (
  <div role="menu" className="absolute top-[112px] left-[377px] w-[229px] border border-[#c4c4c4] bg-[#f3f3f3] p-0.5 font-['Noto_Sans_CJK_SC',sans-serif] text-[13px] text-[#111] shadow-[2px_2px_2px_rgba(0,0,0,0.55)]">
    {entries.map((e, i) =>
      e ? (
        <button key={i} role="menuitem" disabled={e.off} className={`flex h-[22px] w-full items-center pr-2 ${e.hot ? 'bg-[#91c9f1]' : ''} ${e.off ? 'text-[#8a8a8a]' : ''}`}>
          <span className="flex w-8 pl-0.5">{e.icon && <Icon name={e.icon} />}</span>
          <span className="flex-1 text-left">{e.label}</span>
          {e.sub && (
            <svg width="6" height="8" viewBox="0 0 6 8" fill="none" aria-hidden="true"><path d="M1 1L5 4L1 7" stroke="currentColor" strokeWidth="1.300" /></svg>
          )}
        </button>
      ) : (
        <div key={i} className="flex h-[7px] items-center pl-7"><div className="h-px w-full bg-[#cdcdcd]" /></div>
      )
    )}
  </div>
);

const dots = 'bg-[#868c92] bg-[radial-gradient(#565d64_1px,transparent_1px)] bg-[size:4px_4px]';

const Taskbar = () => (
  <footer className="flex h-10 shrink-0 bg-[#0f0f0f] text-white">
    <button aria-label="Start" className="flex w-12 items-center justify-center">
      <svg width="16" height="16" viewBox="0 0 16 16" fill="#fff"><path d="M0 2.300L6.500 1.400V7.500H0ZM7.500 1.200L16 0V7.500H7.500ZM0 8.500H6.500V14.600L0 13.700ZM7.500 8.500H16V16L7.500 14.800Z" /></svg>
    </button>
    <button aria-label="Search" className="flex w-12 items-center justify-center"><span className="size-4 rounded-full border-2 border-white" /></button>
    <button aria-label="Task view" className="flex w-12 items-center justify-center">
      <svg width="16" height="16" viewBox="0 0 16 16" fill="none" stroke="#fff"><path d="M.5 0V2.500H10.500V0M.5 16V13.500H10.500V16M1.500 4.500H9.500V11.500H1.500ZM14 0V16" /><path d="M13 7H15.500V9.500H13Z" fill="#fff" /></svg>
    </button>
    <div className="flex gap-[5px] pl-[7px]">
      <button aria-label="NetEase Music" className="flex w-10 flex-col items-center justify-between border-b-2 border-[#76b9ed]">
        <svg width="24" height="24" viewBox="0 0 24 24" className="mt-2" fill="none"><rect width="24" height="24" fill="#e60012" /><path d="M16.500 5Q12.500 4 12.500 7L14 13Q14 16 12 16Q9.500 16 9.500 13.500Q10 10.500 13 10Q18 10 18.500 14Q18 19.500 12 19.500Q5.500 19 5.500 13Q6 9 9.500 7.500" stroke="#fff" strokeWidth="2" /></svg>
      </button>
      <button aria-label="Electronics Desktop" className="flex w-12 flex-col items-center justify-between border-b-2 border-[#76b9ed] bg-[#343434]">
        <svg width="24" height="24" viewBox="0 0 24 24" className="mt-2" fill="none"><rect width="24" height="24" fill="#2a8a3b" /><g stroke="#e5f4e6"><ellipse cx="7" cy="7" rx="3.500" ry="5" /><ellipse cx="16" cy="7" rx="3.500" ry="5" /></g><path d="M7 4V10M16 4V10" stroke="#e5f4e6" strokeWidth="2" /><text x="12" y="23" textAnchor="middle" fill="#fff" fontSize="10" fontFamily="Liberation Sans">EDT</text></svg>
      </button>
      <button aria-label="WordPad" className="flex w-10 flex-col items-center justify-between border-b-2 border-[#76b9ed]">
        <svg width="20" height="22" viewBox="0 0 20 22" className="mt-2" fill="none"><rect x="1" y="1" width="17" height="19" fill="#cfe3f7" stroke="#5c8fc7" /><rect x="1" y="1" width="17" height="3" fill="#4e86c4" /><path d="M4 15L7 6L10 15M5 12H9" stroke="#ee9a4a" strokeWidth="1.500" /><path d="M12 8H16M12 11H16" stroke="#7ba3cf" /><path d="M14 16L18 20" stroke="#fff" strokeWidth="3" /></svg>
      </button>
    </div>
    <div className="ml-auto flex items-center font-['Noto_Sans_CJK_SC',sans-serif]">
      <svg width="12" height="7" viewBox="0 0 12 7" fill="none"><path d="M1 6L6 1L11 6" stroke="#fff" strokeWidth="1.400" /></svg>
      <svg width="17" height="14" viewBox="0 0 17 14" fill="none" className="ml-[9px]"><rect x="5.500" y="4.500" width="9.500" height="7" stroke="#fff" /><rect x="7" y="6" width="7" height="4" fill="#fff" /><path d="M16 6.500V9.500M1 1V3M4 1V3M.5 3.500H4.500V5.500H.5ZM2.500 6V10H5" stroke="#fff" /></svg>
      <svg width="14" height="14" viewBox="0 0 14 14" fill="none" stroke="#ddd" className="ml-[9px]"><path d="M1 12Q1 2 13 1.500M4 13Q4 5.500 13 5M7 13Q7 9 13 8.500" /><circle cx="11.500" cy="12" r="1.300" fill="#fff" /></svg>
      <span className="ml-2 text-sm">英</span>
      <span className="ml-[15px] flex size-[14px] items-center justify-center bg-white text-sm leading-none font-medium text-[#111]">M</span>
      <div className="ml-5 w-[54px] text-center text-xs leading-[19px]">
        <div>21:09</div>
        <div>2019/3/2</div>
      </div>
      <svg width="17" height="16" viewBox="0 0 17 16" fill="none" className="mr-[19px] ml-[22px]"><path d="M1 1H16V12.500H10.500L8.500 15L6.500 12.500H1Z" stroke="#fff" strokeWidth="1.200" /></svg>
      <div className="mr-1 h-10 w-px bg-[#555]" />
    </div>
  </footer>
);

const App = () => (
  <div className="flex h-screen flex-col overflow-hidden bg-[#f8f8f8] font-['Noto_Sans','Noto_Sans_CJK_SC',sans-serif] text-[11px] text-[#1c1c1c]">
    <header className="flex h-[22px] shrink-0 items-center pl-0.5">
      <svg width="16" height="16" viewBox="0 0 16 16" fill="none" aria-hidden="true"><rect width="16" height="16" fill="#1d7a35" /><g stroke="#d9efdc"><ellipse cx="4.500" cy="8" rx="2.500" ry="5" /><ellipse cx="11.500" cy="8" rx="2.500" ry="5" /></g><path d="M4.500 6V10M11.500 6V10" stroke="#fff" strokeWidth="1.500" /></svg>
      <h1 className="ml-[5px] flex-1 font-['Noto_Sans_CJK_SC',sans-serif] text-[13px] leading-[22px] text-black">ANSYS Electronics Desktop - Project2 - PLATE - 3D Modeler - [Project2 - PLATE - Modeler]</h1>
      <button aria-label="Minimize" className="flex w-[45px] justify-center"><svg width="11" height="11" viewBox="0 0 11 11"><path d="M0 5.500H11" stroke="#000" /></svg></button>
      <button aria-label="Restore" className="flex w-[46px] justify-center"><svg width="11" height="11" viewBox="0 0 11 11" fill="none"><path d="M.5 2.500H8.500V10.500H.5ZM2.500 2.500V.5H10.500V8.500H8.500" stroke="#000" /></svg></button>
      <button aria-label="Close" className="mr-0.5 flex w-[46px] justify-center"><svg width="11" height="11" viewBox="0 0 11 11"><path d="M.5 .5L10.500 10.500M10.500 .5L.5 10.500" stroke="#000" /></svg></button>
    </header>
    <nav className="flex h-[21px] shrink-0 items-center pl-2 text-black">
      <svg width="14" height="11" viewBox="0 0 14 11" aria-hidden="true"><rect x=".5" y=".5" width="13" height="10" fill="#f4f4f4" stroke="#b7bcc4" /><rect x="1" y="2" width="7" height="8" fill="#3b8277" /></svg>
      <div className="ml-2 flex flex-1 gap-3 font-['Noto_Sans_CJK_SC',sans-serif] text-[13px] leading-5">
        {menus.map(m => <button key={m}>{m}</button>)}
      </div>
      <div className="flex gap-[3px] pr-0.5 text-[#666]">
        <button aria-label="Minimize window" className="flex h-4 w-[17px] items-center justify-center bg-white"><svg width="8" height="8" viewBox="0 0 8 8"><path d="M1 6H7" stroke="#666" strokeWidth="2" /></svg></button>
        <button aria-label="Restore window" className="flex h-4 w-[17px] items-center justify-center bg-white"><svg width="8" height="8" viewBox="0 0 8 8" fill="none"><path d="M.5 3.500H5.500V7.500H.5ZM2.500 3V.5H7.500V5.500H6" stroke="#666" /></svg></button>
        <button aria-label="Close window" className="flex h-4 w-[17px] items-center justify-center bg-white"><svg width="8" height="8" viewBox="0 0 8 8"><path d="M1 1L7 7M7 1L1 7" stroke="#666" strokeWidth="2" /></svg></button>
      </div>
    </nav>
    <Ribbon />

    <div className="flex h-[22px] shrink-0 bg-[#efefef] text-[#444]">
      <div className="flex h-[17px] flex-1">
        {tabs.map(t => (
          <button key={t.name} className={`flex h-full items-center justify-center pb-1 leading-3 ${t.w} ${t.name === 'Draw' ? 'border border-t-0 border-[#c5c8d8] bg-[#e6e7f0] text-[#1d5fa8]' : ''}`}>{t.name}</button>
        ))}
      </div>
      <div className="flex h-[18px] items-center gap-2 pr-1">
        <svg width="14" height="14" viewBox="0 0 14 14" aria-hidden="true"><circle cx="7" cy="7" r="6.500" fill="#2161b5" /><path d="M5 5.500Q5 3.500 7 3.500T9 5.500Q9 6.500 7 7.500V9M7 10V11.500" stroke="#fff" strokeWidth="1.400" fill="none" /></svg>
        <svg width="16" height="16" viewBox="0 0 16 16" aria-hidden="true"><circle cx="8" cy="8" r="8" fill="#fbc21a" /><path d="M1 15L5.500 1H10L15 15H11L7.800 5L5 15Z" fill="#111" /></svg>
      </div>
    </div>

    <main className="relative flex min-h-0 flex-1">
      <ProjectManager />
      <div className={`w-[7px] shrink-0 ${dots}`} />
      <ModelTree />
      <section className="min-w-0 flex-1 border-t-2 border-[#666]"><Scene /></section>
      <ContextMenu />
      <svg width="13" height="20" viewBox="0 0 13 20" className="absolute top-[199px] left-[439px]" aria-hidden="true"><path d="M.5 1V16L4 12.500L6.500 18.500L9 17.500L6.500 11.500H11.500Z" fill="#fff" stroke="#000" /></svg>
      <div className="absolute top-[210px] right-0 flex h-[42px] w-[17px] items-center overflow-hidden rounded-l-full border-l border-[#6fbf80] bg-[#8ddb9c] pl-0.5 font-bold text-white">29</div>
    </main>

    <div className={`flex h-6 shrink-0 items-end gap-[14px] pl-[5px] text-[#111] ${dots}`}>
      <button className="h-[21px] rounded-t-xs border border-b-0 border-[#596475] bg-[#c9d1dc] px-[3px] pb-px">Progress</button>
      <button className="h-[21px] rounded-t-xs border border-b-0 border-[#596475] bg-[#c9d1dc] px-[3px] pb-px">Message Manager</button>
    </div>
    <div className="flex h-[26px] shrink-0 items-center gap-1 bg-[#c8d0d9] pt-px pl-1 text-[#111]">
      <span className="flex-1 font-['Noto_Sans_CJK_SC',sans-serif] text-xs">Expand all child items</span>
      <button className="flex h-[22px] w-[123px] items-center gap-2 border border-[#1c5fa5] bg-[#c7dff3] pl-1 font-['Liberation_Mono',monospace] text-[10px] whitespace-nowrap">
        <svg width="12" height="10" viewBox="0 0 12 10"><rect x=".5" y="1.500" width="10" height="8" fill="#f4d256" stroke="#b08a1f" /><rect x="4" y="4" width="3" height="3" fill="#b07c1a" /></svg>
        Hide 0 Messages
      </button>
      <button className="mr-px flex h-[22px] w-[111px] items-center gap-2 border border-[#1c5fa5] bg-[#c7dff3] pl-1 font-['Liberation_Mono',monospace] text-[10px] whitespace-nowrap">
        <svg width="10" height="8" viewBox="0 0 10 8"><path d="M0 1H10" stroke="#444" /><rect x="0" y="1" width="6" height="4" fill="#12c822" /></svg>
        Hide Progress
      </button>
    </div>
    <Taskbar />
  </div>
);

export default App;
